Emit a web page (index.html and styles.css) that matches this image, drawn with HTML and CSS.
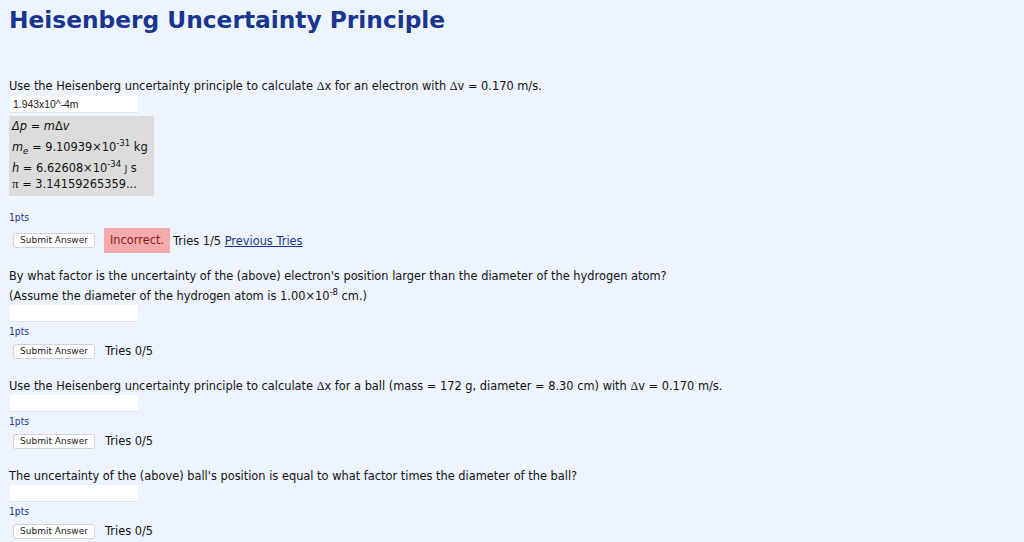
FILE: index.html
```html
<!DOCTYPE html>
<html>
<head>
<meta charset="utf-8">
<link rel="stylesheet" href="styles.css">
</head>
<body>
<h1 class="title">Heisenberg Uncertainty Principle</h1>

<section class="part part-first">
  <p class="q">Use the Heisenberg uncertainty principle to calculate <span class="delta">Δ</span>x for an electron with <span class="delta">Δ</span>v = 0.170 m/s.</p>
  <div class="answer filled">1.943x10^-4m</div>
  <div class="hint">
    <div class="hl"><i>Δp</i> = <i>m</i>Δ<i>v</i></div>
    <div class="hl"><i>m<sub>e</sub></i> = 9.10939×10<sup>-31</sup> kg</div>
    <div class="hl"><i>h</i> = 6.62608×10<sup>-34</sup> <span class="small">J</span> s</div>
    <div class="hl tight"><span class="pi">π</span> = 3.14159265359...</div>
  </div>
  <div class="pts pts-first">1pts</div>
  <div class="row row-first">
    <span class="btn">Submit Answer</span>
    <span class="incorrect">Incorrect.</span>
    <span class="tries">Tries 1/5 <a class="prev" href="#">Previous Tries</a></span>
  </div>
</section>

<section class="part part-2">
  <p class="q q-first">By what factor is the uncertainty of the (above) electron's position larger than the diameter of the hydrogen atom?</p>
  <p class="q">(Assume the diameter of the hydrogen atom is 1.00×10<sup>-8</sup> cm.)</p>
  <div class="answer"></div>
  <div class="pts">1pts</div>
  <div class="row">
    <span class="btn">Submit Answer</span>
    <span class="tries">Tries 0/5</span>
  </div>
</section>

<section class="part part-3">
  <p class="q">Use the Heisenberg uncertainty principle to calculate <span class="delta">Δ</span>x for a ball (mass = 172 g, diameter = 8.30 cm) with <span class="delta">Δ</span>v = 0.170 m/s.</p>
  <div class="answer"></div>
  <div class="pts">1pts</div>
  <div class="row">
    <span class="btn">Submit Answer</span>
    <span class="tries">Tries 0/5</span>
  </div>
</section>

<section class="part part-4">
  <p class="q">The uncertainty of the (above) ball's position is equal to what factor times the diameter of the ball?</p>
  <div class="answer"></div>
  <div class="pts">1pts</div>
  <div class="row">
    <span class="btn">Submit Answer</span>
    <span class="tries">Tries 0/5</span>
  </div>
</section>
</body>
</html>
```

FILE: styles.css
```css
html, body {
  margin: 0;
  padding: 0;
  background: #edf4fe;
}
body {
  padding: 0 9px;
  font-family: "DejaVu Sans", Verdana, sans-serif;
  font-size: 11.4px;
  color: #111;
  height: 542px;
  overflow: hidden;
}
.title {
  margin: 0;
  padding-top: 5px;
  height: 30px;
  font-size: 23.3px;
  font-weight: bold;
  color: #1a3591;
  line-height: 30px;
  white-space: nowrap;
}
.part { display: flex; flex-direction: column; align-items: flex-start; }
.part-first { margin-top: 42px; }
.part-2 { margin-top: 13px; }
.part-3 { margin-top: 17px; }
.part-4 { margin-top: 17px; }
.q {
  margin: 0;
  line-height: 18px;
  height: 18px;
  white-space: nowrap;
}
.q-first { line-height: 21px; height: 21px; }
.q sup { font-size: 8.5px; vertical-align: 5px; line-height: 0; }
.delta { font-family: "Liberation Serif", serif; font-size: 12px; }
.answer {
  margin-left: 1px;
  width: 128px;
  height: 17px;
  background: #fff;
  border-bottom: 1px solid #dde3ea;
  box-sizing: border-box;
  font-family: "Liberation Sans", Arial, sans-serif;
  font-size: 10.4px;
  line-height: 17px;
  padding-left: 3px;
  color: #222;
}
.part-first .answer { margin-top: 1px; }
.hint {
  margin-top: 3px;
  width: 145px;
  height: 80px;
  box-sizing: border-box;
  background: #dcdcdc;
  padding: 0 0 0 3px;
}
.hl { line-height: 21px; height: 21px; white-space: nowrap; }
.hl.tight { height: 17px; line-height: 10px; }
.hl sub { font-size: 8.5px; vertical-align: -3px; line-height: 0; }
.hl sup { font-size: 8.5px; vertical-align: 5px; line-height: 0; }
.small { font-size: 8.5px; }
.pi { font-family: "Liberation Serif", serif; font-size: 13px; }
.pts {
  margin-top: 3px;
  height: 14px;
  line-height: 14px;
  font-size: 10.2px;
  color: #1a3591;
  font-family: "DejaVu Sans Condensed", "DejaVu Sans", sans-serif;
}
.pts-first { margin-top: 15px; }
.row {
  display: flex;
  align-items: center;
  height: 18px;
  margin-top: 3px;
}
.row-first { height: 25px; }
.btn {
  margin-left: 4px;
  width: 82px;
  height: 15px;
  box-sizing: border-box;
  background: #fff;
  border: 1px solid #d0d4da;
  border-radius: 3px;
  font-size: 9px;
  line-height: 13px;
  text-align: center;
  color: #222;
  white-space: nowrap;
}
.incorrect {
  margin-left: 9px;
  width: 66px;
  height: 25px;
  background: #f4aaaa;
  color: #8b1a1a;
  line-height: 25px;
  text-align: center;
}
.tries { margin-left: 10px; }
.incorrect + .tries { margin-left: 3px; }
.prev { color: #1a3591; text-decoration: underline; }
```
